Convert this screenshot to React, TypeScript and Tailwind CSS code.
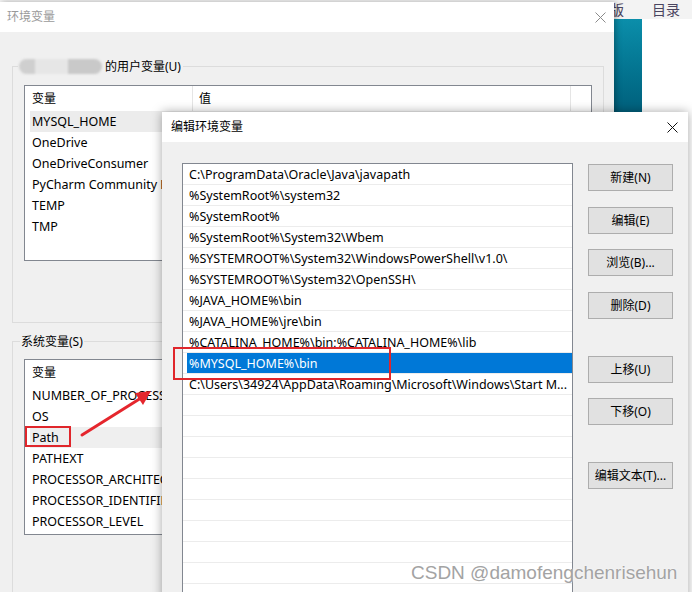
import React from "react";

const FONT = "font-['Noto_Sans','Noto_Sans_CJK_SC',sans-serif]";

function CloseX({ color, size = 11 }: { color: string; size?: number }) {
  return (
    <svg width={size} height={size} viewBox="0 0 11 11">
      <path d="M0.5 0.5 L10.5 10.5 M10.5 0.5 L0.5 10.5" stroke={color} strokeWidth="1" fill="none" />
    </svg>
  );
}

export default function App() {
  const userVars = ["MYSQL_HOME", "OneDrive", "OneDriveConsumer", "PyCharm Community Edition", "TEMP", "TMP"];
  const sysVars = [
    "NUMBER_OF_PROCESSORS",
    "OS",
    "Path",
    "PATHEXT",
    "PROCESSOR_ARCHITECTURE",
    "PROCESSOR_IDENTIFIER",
    "PROCESSOR_LEVEL",
  ];
  const paths = [
    "C:\\ProgramData\\Oracle\\Java\\javapath",
    "%SystemRoot%\\system32",
    "%SystemRoot%",
    "%SystemRoot%\\System32\\Wbem",
    "%SYSTEMROOT%\\System32\\WindowsPowerShell\\v1.0\\",
    "%SYSTEMROOT%\\System32\\OpenSSH\\",
    "%JAVA_HOME%\\bin",
    "%JAVA_HOME%\\jre\\bin",
    "%CATALINA_HOME%\\bin;%CATALINA_HOME%\\lib",
    "%MYSQL_HOME%\\bin",
    "C:\\Users\\34924\\AppData\\Roaming\\Microsoft\\Windows\\Start M...",
  ];
  const rows = [...paths, ...Array.from({ length: 12 }, () => "")];
  const buttons: { label: string; mt: string }[] = [
    { label: "新建(N)", mt: "mt-0" },
    { label: "编辑(E)", mt: "mt-[16px]" },
    { label: "浏览(B)...", mt: "mt-[15px]" },
    { label: "删除(D)", mt: "mt-[16px]" },
    { label: "上移(U)", mt: "mt-[37px]" },
    { label: "下移(O)", mt: "mt-[15px]" },
    { label: "编辑文本(T)...", mt: "mt-[37px]" },
  ];

  return (
    <div className={`relative w-[692px] h-[592px] overflow-hidden bg-white ${FONT}`}>
      {/* desktop / browser background */}
      <div className="flex flex-col h-full">
        <div className="h-[19px] shrink-0 bg-[#f3f3f3] flex items-center justify-end pr-[12px] text-[14px] text-[#4a4560] leading-none">
          <span className="mr-[28px]">版</span>
          <span>目录</span>
        </div>
        <div className="flex flex-1">
          <div className="w-[614px]" />
          <div className="w-[28px] h-[93px] bg-gradient-to-b from-[#0b8eaa] to-[#00607c]" />
          <div className="flex-1 bg-white" />
        </div>
      </div>

      {/* background window: 环境变量 */}
      <div className="absolute left-0 top-[2px] w-[614px] h-[600px] bg-[#f0f0f0] shadow-[2px_0_6px_rgba(0,0,0,0.3)] flex flex-col overflow-hidden">
        <div className="h-[30px] shrink-0 bg-white flex items-center justify-between pl-[7px] pr-[8px]">
          <span className="text-[12px] text-[#9a9a9a]">环境变量</span>
          <CloseX color="#8a8a8a" />
        </div>
        <div className="shrink-0 pl-[12px] pt-[34px] text-[12px] text-black">
          {/* user variables group */}
          <div className="relative w-[592px] h-[257px] border border-[#dcdcdc] pl-[11px] pt-[18px]">
            <div className="absolute left-[5px] top-[-9px] h-[17px] flex items-center bg-[#f0f0f0] pr-[2px]">
              <div className="flex items-center h-[15px] blur-[1px] ml-[1px]">
                <div className="w-[16px] h-[15px] rounded-l-full bg-[#cfcfcf]" />
                <div className="w-[33px] h-[15px] bg-[#e6e6e6]" />
                <div className="w-[34px] h-[15px] rounded-r-full bg-[#c9c9c9]" />
              </div>
              <span className="ml-[3px]">的用户变量(U)</span>
            </div>
            <div className="w-[568px] h-[176px] border border-[#828790] bg-white overflow-hidden text-[12.5px]">
              <div className="h-[25px] flex items-center text-[12px]">
                <div className="w-[168px] h-full flex items-center pl-[7px] border-r border-[#e5e5e5]">变量</div>
                <div className="w-[378px] h-full flex items-center pl-[6px] border-r border-[#e5e5e5]">值</div>
              </div>
              {userVars.map((v, i) => (
                <div
                  key={v}
                  className={`h-[21px] ml-[5px] pl-[2px] pt-[2px] flex items-center whitespace-nowrap ${i === 0 ? "bg-[#ececec]" : ""}`}
                >
                  {v}
                </div>
              ))}
            </div>
          </div>

          {/* system variables group */}
          <div className="relative mt-[18px] w-[592px] h-[300px] border border-[#dcdcdc] pl-[11px] pt-[17px]">
            <div className="absolute left-[7px] top-[-9px] h-[17px] flex items-center bg-[#f0f0f0] px-[1px]">
              系统变量(S)
            </div>
            <div className="w-[568px] h-[176px] border border-[#828790] bg-white overflow-hidden text-[12.5px]">
              <div className="h-[25px] flex items-center pl-[7px] text-[12px]">变量</div>
              {sysVars.map((v) => (
                <div
                  key={v}
                  className={`h-[21px] ml-[5px] pl-[2px] pt-[2px] flex items-center whitespace-nowrap ${v === "Path" ? "bg-[#efefef]" : ""}`}
                >
                  {v}
                </div>
              ))}
            </div>
          </div>
        </div>
      </div>

      {/* front window: 编辑环境变量 */}
      <div className="absolute left-[162px] top-[112px] w-[526px] h-[490px] bg-[#f0f0f0] shadow-[0_0_10px_rgba(0,0,0,0.35)] flex flex-col overflow-hidden">
        <div className="h-[30px] shrink-0 bg-white flex items-center justify-between pl-[9px] pr-[10px]">
          <span className="text-[12px] text-black">编辑环境变量</span>
          <CloseX color="#111" />
        </div>
        <div className="shrink-0 flex pl-[20px] pt-[21px] text-[12px] text-black">
          <div className="w-[391px] h-[460px] border border-[#828790] bg-white overflow-hidden text-[12.5px]">
            {rows.map((p, i) =>
              i === 9 ? (
                <div key={i} className="h-[21px] border-b border-[#ececec]">
                  <div className="h-[20px] ml-[4px] pl-[2px] pt-[2px] bg-[#0078d7] text-white flex items-center whitespace-nowrap">
                    {p}
                  </div>
                </div>
              ) : (
                <div key={i} className="h-[21px] pl-[6px] pt-[2px] border-b border-[#ececec] flex items-center whitespace-nowrap">
                  {p}
                </div>
              )
            )}
          </div>
          <div className="ml-[15px] pt-[1px] flex flex-col w-[85px]">
            {buttons.map((b) => (
              <div
                key={b.label}
                className={`${b.mt} h-[27px] shrink-0 border border-[#adadad] bg-[#e1e1e1] flex items-center justify-center whitespace-nowrap`}
              >
                {b.label}
              </div>
            ))}
          </div>
        </div>
      </div>

      {/* annotations */}
      <div className="absolute left-[25px] top-[426px] w-[46px] h-[21px] border-2 border-[#e0262b]" />
      <div className="absolute left-[173px] top-[347px] w-[218px] h-[33px] border-2 border-[#e0262b]" />
      <svg className="absolute left-0 top-0 pointer-events-none" width="692" height="592">
        <line x1="82" y1="435" x2="141" y2="398" stroke="#e5262d" strokeWidth="3" strokeLinecap="round" />
        <polygon points="151,391 135,393 143,405" fill="#e5262d" />
      </svg>

      {/* watermark */}
      <div className="absolute left-[411px] top-[561px] text-[19px] leading-[24px] text-[#a3a3a3] font-['Liberation_Sans',sans-serif] [text-shadow:0_0_2px_#ffffff] whitespace-nowrap">
        CSDN @damofengchenrisehun
      </div>
    </div>
  );
}
